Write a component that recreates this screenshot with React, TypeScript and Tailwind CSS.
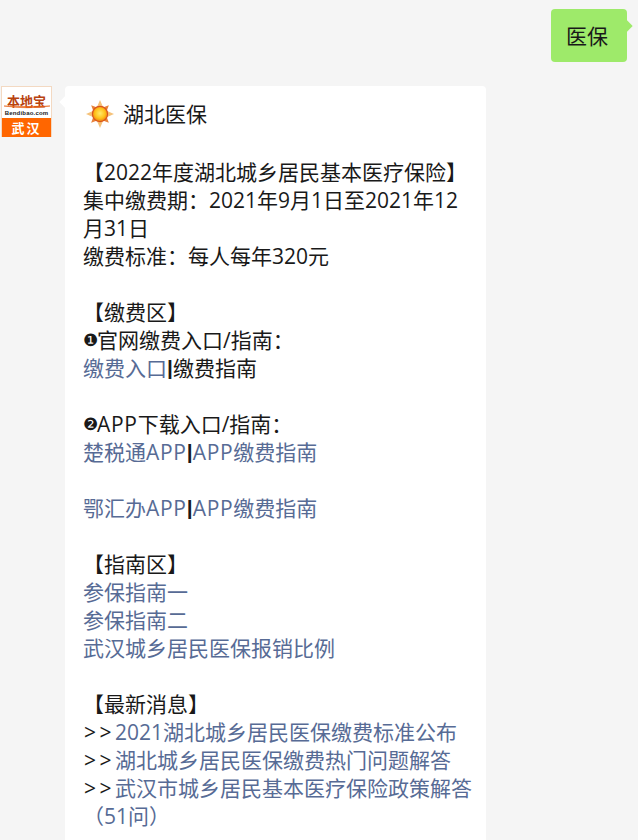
const FONT = "font-['Open_Sans','Noto_Sans_CJK_SC',sans-serif]";

function Avatar() {
  return (
    <div className="w-[51px] h-[51px] shrink-0 flex flex-col overflow-hidden border-t border-x border-[#f3d9c2] bg-white">
      <div className="h-[31px] flex flex-col items-center">
        <div className="text-[13px] leading-[13px] mt-[7px] font-bold text-[#b8420f] font-['Noto_Sans_CJK_SC',sans-serif]">本地宝</div>
        <svg viewBox="0 0 46 4" className="w-[46px] h-[4px] -mt-[2px] shrink-0">
          <path d="M0 1 Q23 4.5 46 1 Q23 2 0 1Z" fill="#e8641b" stroke="#e8641b" strokeWidth="0.6" />
        </svg>
        <div className="text-[6px] leading-[6px] mt-[1px] font-bold text-[#222] font-['Liberation_Sans',sans-serif] tracking-[0.2px]">Bendibao.com</div>
      </div>
      <div className="flex-1 bg-[#ff6600] flex items-center justify-center text-white text-[13px] leading-none font-bold tracking-[2px] font-['Noto_Sans_CJK_SC',sans-serif]">武汉</div>
    </div>
  );
}

function Sun() {
  const rays = [0, 45, 90, 135, 180, 225, 270, 315];
  return (
    <svg viewBox="0 0 28 28" className="w-[28px] h-[28px] shrink-0">
      <defs>
        <radialGradient id="sunCore" cx="50%" cy="45%" r="55%">
          <stop offset="0%" stopColor="#ffe96a" />
          <stop offset="65%" stopColor="#ffc21a" />
          <stop offset="100%" stopColor="#f08a10" />
        </radialGradient>
      </defs>
      {rays.map((a, i) => (
        <polygon
          key={a}
          points={i % 2 === 0 ? "14,0 10.5,8 17.5,8" : "14,1.5 11,8 17,8"}
          transform={`rotate(${a} 14 14)`}
          fill={i % 2 === 0 ? "#f5c27a" : "#e8823a"}
        />
      ))}
      <circle cx="14" cy="14" r="8.2" fill="#d9531e" />
      <circle cx="14" cy="14" r="7" fill="url(#sunCore)" />
    </svg>
  );
}

const L = ({ children }: { children: React.ReactNode }) => <span className="text-[#576b95] align-top">{children}</span>;
const Blank = () => <div className="h-[28px]" />;
const Arrows = () => <span className="tracking-[3.5px] pl-[1px] align-top">&gt;&gt;</span>;
const Dot = ({ c }: { c: string }) => (
  <span className="font-['DejaVu_Sans',sans-serif] text-[17px] inline-block w-[14px] align-top">{c}</span>
);
const Bar = () => (
  <span className="inline-block w-[6px] text-center font-bold align-top font-['Liberation_Sans',sans-serif]">|</span>
);
const App_ = () => <span className="tracking-[0.7px] align-top">APP</span>;

export default function App() {
  return (
    <div className={`h-[840px] w-[638px] overflow-hidden bg-[#f5f5f5] text-[#191919] ${FONT}`}>
      <div className="flex justify-end pt-[9px] pr-[11px]">
        <div className="relative w-[76px] h-[53px] pr-[4px] rounded-[4px] bg-[#9eea6a] flex items-center justify-center text-[21px] leading-[28px]">
          医保
          <div className="absolute -right-[4px] top-[13px] w-[8px] h-[8px] rotate-45 bg-[#9eea6a]" />
        </div>
      </div>
      <div className="flex items-start pl-[1px] mt-[24px]">
        <Avatar />
        <div className="relative ml-[13px] w-[421px] shrink-0 rounded-[4px] bg-white pl-[18px] pr-[12px] pt-[14px] text-[21px] leading-[28px]">
          <div className="absolute -left-[4px] top-[12px] w-[8px] h-[8px] rotate-45 bg-white" />
          <div className="flex items-center h-[28px] mb-[30px] ml-[3px] gap-[9px]">
            <Sun />
            <span>湖北医保</span>
          </div>
          <div>【2022年度湖北城乡居民基本医疗保险】</div>
          <div>集中缴费期：2021年9月1日至2021年12月31日</div>
          <div>缴费标准：每人每年320元</div>
          <Blank />
          <div>【缴费区】</div>
          <div><Dot c="❶" />官网缴费入口/指南：</div>
          <div><L>缴费入口</L><Bar />缴费指南</div>
          <Blank />
          <div><Dot c="❷" /><App_ />下载入口/指南：</div>
          <div><L>楚税通<App_ /></L><Bar /><L><App_ />缴费指南</L></div>
          <Blank />
          <div><L>鄂汇办<App_ /></L><Bar /><L><App_ />缴费指南</L></div>
          <Blank />
          <div>【指南区】</div>
          <div><L>参保指南一</L></div>
          <div><L>参保指南二</L></div>
          <div><L>武汉城乡居民医保报销比例</L></div>
          <Blank />
          <div>【最新消息】</div>
          <div><Arrows /><L>2021湖北城乡居民医保缴费标准公布</L></div>
          <div><Arrows /><L>湖北城乡居民医保缴费热门问题解答</L></div>
          <div><Arrows /><L>武汉市城乡居民基本医疗保险政策解答（51问）</L></div>
          <Blank />
        </div>
      </div>
    </div>
  );
}
